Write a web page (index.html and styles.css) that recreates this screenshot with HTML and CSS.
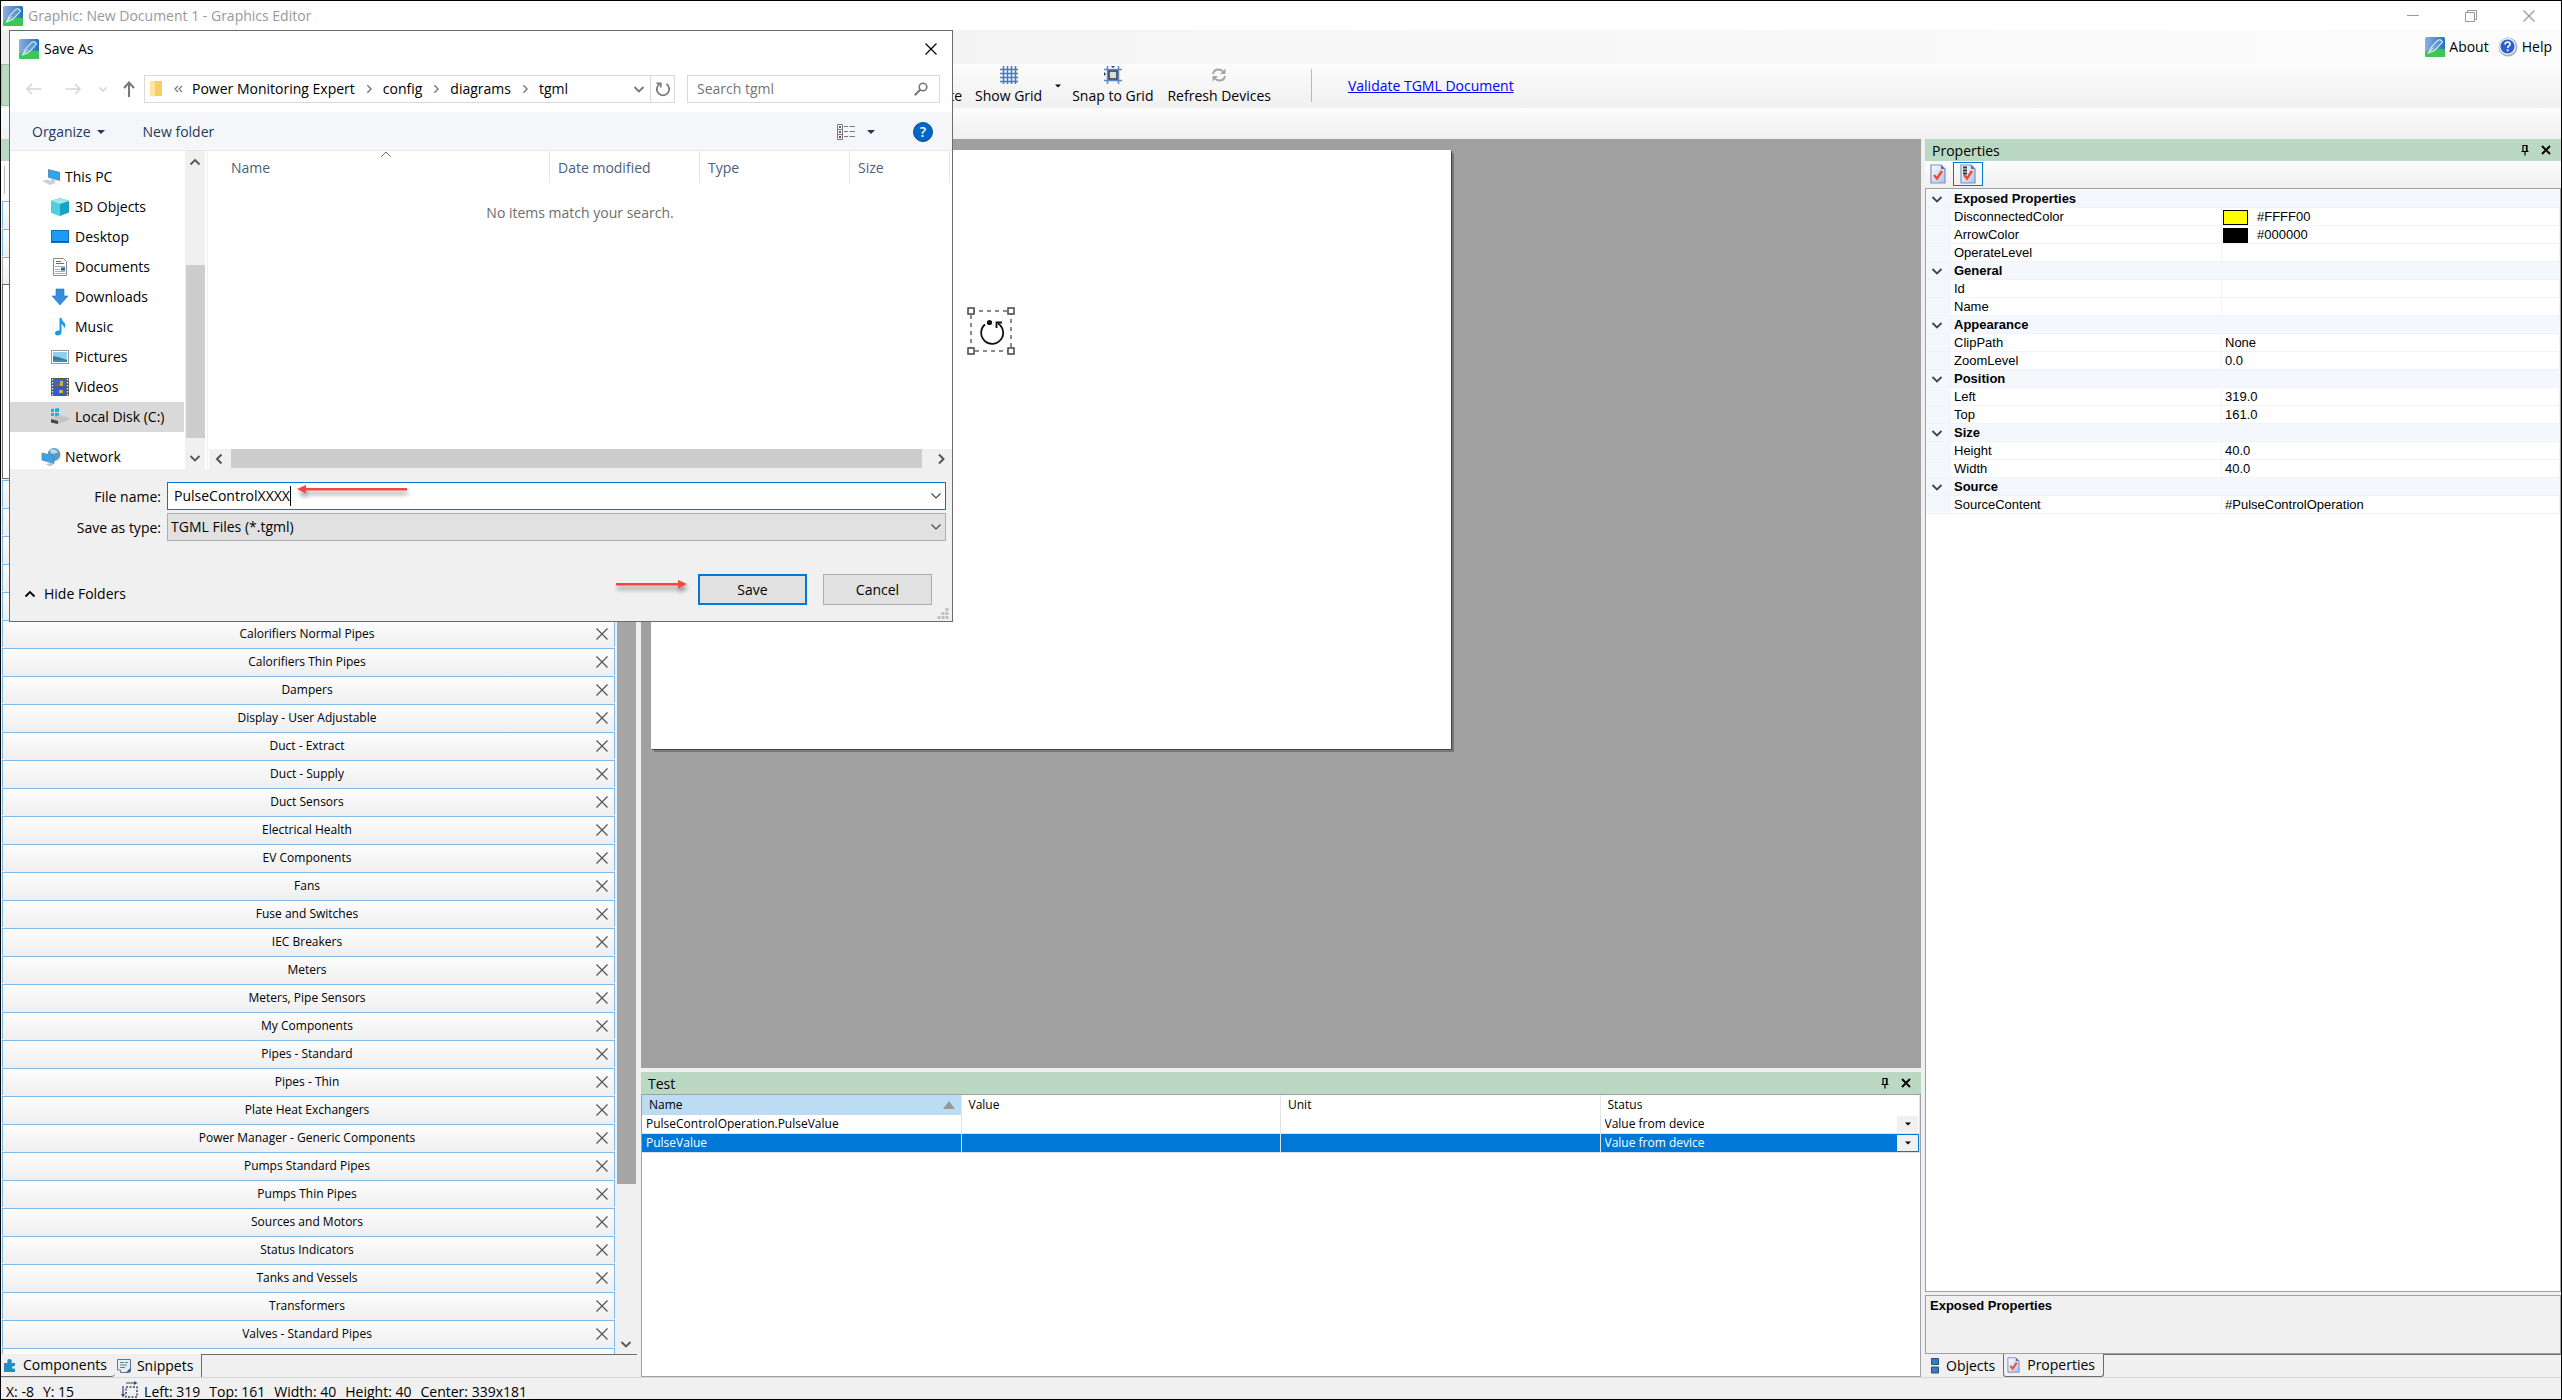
FILE: index.html
```html
<!DOCTYPE html>
<html lang="en">
  <head>
    <meta charset="utf-8">
    <title>Graphic: New Document 1 - Graphics Editor</title>
    <link rel="stylesheet" href="styles.css">
  </head>
  <body>
    <!-- Shared icons -->
    <svg class="sprite" width="0" height="0">
      <defs>
        <linearGradient id="app-blue" x1="0" y1="0" x2="1" y2="0">
          <stop offset="0" stop-color="#8fb0dc" /><stop offset="1" stop-color="#2272c0" />
        </linearGradient>
        <linearGradient id="doc-fill" x1="0" y1="0" x2="1" y2="1">
          <stop offset="0" stop-color="#ffffff" /><stop offset="1" stop-color="#a9c0ea" />
        </linearGradient>
      </defs>
      <symbol id="app" viewBox="0 0 20 20">
        <rect width="20" height="20" rx="1.500" fill="url(#app-blue)" />
        <path d="M0 15Q7 11 20 12V18.500Q20 20 18.500 20H1.500Q0 20 0 18.500Z" fill="#3cc755" />
        <path d="M3.500 16L6.500 10L12.500 3.500Q15.500 1.500 17.500 5L11 12L8.500 14Z" fill="#7db4da" fill-opacity=".4" stroke="#dcecfa" stroke-width="1.100" />
        <path d="M3.500 16L8.500 10.500" stroke="#dcecfa" />
      </symbol>
      <symbol id="x" viewBox="0 0 12 12"><path d="M.5 .5L11.500 11.500M11.500 .5L.5 11.500" fill="none" stroke="currentColor" stroke-width="1.200" /></symbol>
      <symbol id="x-bold" viewBox="0 0 12 12"><path d="M2 2L10 10M10 2L2 10" fill="none" stroke="currentColor" stroke-width="1.900" /></symbol>
      <symbol id="pin" viewBox="0 0 12 12"><path d="M4 7V1.500H8V7M2.500 7.500H9.500M6 7.500V11.500M7.500 1.500V7" fill="none" stroke="currentColor" stroke-width="1.200" /></symbol>
      <symbol id="down" viewBox="0 0 12 12"><path d="M1.500 4L6 8.500L10.500 4" fill="none" stroke="currentColor" stroke-width="1.800" /></symbol>
      <symbol id="up" viewBox="0 0 12 12"><path d="M1.500 8.500L6 4L10.500 8.500" fill="none" stroke="currentColor" stroke-width="1.800" /></symbol>
      <symbol id="left" viewBox="0 0 12 12"><path d="M8.500 1.500L4 6L8.500 10.500" fill="none" stroke="currentColor" stroke-width="2" /></symbol>
      <symbol id="right" viewBox="0 0 12 12"><path d="M4 1.500L8.500 6L4 10.500" fill="none" stroke="currentColor" stroke-width="2" /></symbol>
      <symbol id="thin-right" viewBox="0 0 12 12"><path d="M4 1.500L8.500 6L4 10.500" fill="none" stroke="currentColor" stroke-width="1.600" /></symbol>
      <symbol id="thin-down" viewBox="0 0 12 12"><path d="M1.500 3.500L6 8L10.500 3.500" fill="none" stroke="currentColor" stroke-width="1.100" /></symbol>
      <symbol id="caret" viewBox="0 0 8 8"><path d="M0 2H8L4 6Z" fill="currentColor" /></symbol>
      <symbol id="doc-check" viewBox="0 0 16 20">
        <path d="M1 1H11L15 5V19H1Z" fill="url(#doc-fill)" stroke="#7d8fc4" stroke-width="1.200" />
        <path d="M11 1V5H15Z" fill="#5a6fb0" />
        <path d="M4 11L7 14.500L12 7" fill="none" stroke="#f04a28" stroke-width="2.400" />
      </symbol>
    </svg>

    <div class="window">
      <header class="titlebar">
        <svg class="icon-20"><use href="#app" /></svg>
        <h1>Graphic: New Document 1 - Graphics Editor</h1>
        <div class="window-buttons">
          <button type="button" aria-label="Minimize"><svg class="icon-12" viewBox="0 0 12 12"><path d="M0 5.500H12" stroke="currentColor" /></svg></button>
          <button type="button" aria-label="Restore"><svg class="icon-12" viewBox="0 0 12 12"><path d="M.5 2.500H9.500V11.500H.5ZM2.500 2.500V.5H11.500V9.500H9.500" fill="none" stroke="currentColor" /></svg></button>
          <button type="button" aria-label="Close"><svg class="icon-12"><use href="#x" /></svg></button>
        </div>
      </header>

      <div class="menubar">
        <button type="button"><svg class="icon-20"><use href="#app" /></svg>About</button>
        <button type="button">
          <svg class="icon-20" viewBox="0 0 20 20">
            <circle cx="10" cy="10" r="9.500" fill="#a9aeb8" /><circle cx="9.500" cy="9.500" r="8.500" fill="#e8ebf2" /><circle cx="9.500" cy="9.500" r="7" fill="#2c5fc8" />
            <path d="M7 7.500Q7.200 5 9.600 5Q12 5 12 7.200Q12 8.500 10.500 9.300Q9.700 9.800 9.700 11" fill="none" stroke="#fff" stroke-width="1.700" /><circle cx="9.700" cy="13.300" r="1.100" fill="#fff" />
          </svg>Help
        </button>
      </div>

      <div class="toolbar">
        <div class="tool-group">
          <button type="button" class="tool active">Select</button>
          <button type="button" class="tool">Rotate</button>
        </div>
        <button type="button" class="tool">
          <svg class="icon-18" viewBox="0 0 18 18"><path d="M3.500 0V18M7.500 0V18M11.500 0V18M15.500 0V18M0 3.500H18M0 7.500H18M0 11.500H18M0 15.500H18" stroke="#4f78bd" stroke-width="1.600" /></svg>
          Show Grid
        </button>
        <button type="button" class="tool-menu" aria-label="Grid options"><svg class="icon-6"><use href="#caret" /></svg></button>
        <button type="button" class="tool">
          <svg class="icon-18" viewBox="0 0 18 18">
            <path d="M3.500 0V18M14.500 0V18M0 3.500H18M0 14.500H18" stroke="#5c86c6" stroke-width="1.500" />
            <rect x="5" y="5" width="8" height="8" fill="#d6dbe5" stroke="#30343c" stroke-width="1.500" />
            <path d="M7 0H11L9 2ZM0 6L2 8L0 10Z" fill="#223a70" />
          </svg>
          Snap to Grid
        </button>
        <button type="button" class="tool">
          <svg class="icon-18" viewBox="0 0 18 18">
            <path d="M3 8Q4 3.500 8.500 3.500Q11.500 3.500 13.500 6M15 10Q14 14.500 9.500 14.500Q6.500 14.500 4.500 12" fill="none" stroke="#a5a5a5" stroke-width="2" />
            <path d="M15.500 2.500V8H10ZM2.500 15.500V10H8Z" fill="#a5a5a5" />
          </svg>
          Refresh Devices
        </button>
        <span class="separator"></span>
        <a href="#validate">Validate TGML Document</a>
      </div>
      <div class="toolbar-secondary"></div>

      <main class="workspace">
        <aside class="dock components">
          <div class="dock-header"></div>
          <div class="component-tools"><span></span></div>
          <div class="component-body">
            <div class="component-list">
              <div class="component"></div>
              <div class="component"></div>
              <div class="component open"></div>
              <div class="component-content"></div>
              <div class="component"></div>
              <div class="component"></div>
              <div class="component"></div>
              <div class="component"></div>
              <div class="component"></div>
              <div class="component"><span>Calorifiers Normal Pipes</span><button type="button" aria-label="Close"><svg class="icon-12"><use href="#x" /></svg></button></div>
              <div class="component"><span>Calorifiers Thin Pipes</span><button type="button" aria-label="Close"><svg class="icon-12"><use href="#x" /></svg></button></div>
              <div class="component"><span>Dampers</span><button type="button" aria-label="Close"><svg class="icon-12"><use href="#x" /></svg></button></div>
              <div class="component"><span>Display - User Adjustable</span><button type="button" aria-label="Close"><svg class="icon-12"><use href="#x" /></svg></button></div>
              <div class="component"><span>Duct - Extract</span><button type="button" aria-label="Close"><svg class="icon-12"><use href="#x" /></svg></button></div>
              <div class="component"><span>Duct - Supply</span><button type="button" aria-label="Close"><svg class="icon-12"><use href="#x" /></svg></button></div>
              <div class="component"><span>Duct Sensors</span><button type="button" aria-label="Close"><svg class="icon-12"><use href="#x" /></svg></button></div>
              <div class="component"><span>Electrical Health</span><button type="button" aria-label="Close"><svg class="icon-12"><use href="#x" /></svg></button></div>
              <div class="component"><span>EV Components</span><button type="button" aria-label="Close"><svg class="icon-12"><use href="#x" /></svg></button></div>
              <div class="component"><span>Fans</span><button type="button" aria-label="Close"><svg class="icon-12"><use href="#x" /></svg></button></div>
              <div class="component"><span>Fuse and Switches</span><button type="button" aria-label="Close"><svg class="icon-12"><use href="#x" /></svg></button></div>
              <div class="component"><span>IEC Breakers</span><button type="button" aria-label="Close"><svg class="icon-12"><use href="#x" /></svg></button></div>
              <div class="component"><span>Meters</span><button type="button" aria-label="Close"><svg class="icon-12"><use href="#x" /></svg></button></div>
              <div class="component"><span>Meters, Pipe Sensors</span><button type="button" aria-label="Close"><svg class="icon-12"><use href="#x" /></svg></button></div>
              <div class="component"><span>My Components</span><button type="button" aria-label="Close"><svg class="icon-12"><use href="#x" /></svg></button></div>
              <div class="component"><span>Pipes - Standard</span><button type="button" aria-label="Close"><svg class="icon-12"><use href="#x" /></svg></button></div>
              <div class="component"><span>Pipes - Thin</span><button type="button" aria-label="Close"><svg class="icon-12"><use href="#x" /></svg></button></div>
              <div class="component"><span>Plate Heat Exchangers</span><button type="button" aria-label="Close"><svg class="icon-12"><use href="#x" /></svg></button></div>
              <div class="component"><span>Power Manager - Generic Components</span><button type="button" aria-label="Close"><svg class="icon-12"><use href="#x" /></svg></button></div>
              <div class="component"><span>Pumps Standard Pipes</span><button type="button" aria-label="Close"><svg class="icon-12"><use href="#x" /></svg></button></div>
              <div class="component"><span>Pumps Thin Pipes</span><button type="button" aria-label="Close"><svg class="icon-12"><use href="#x" /></svg></button></div>
              <div class="component"><span>Sources and Motors</span><button type="button" aria-label="Close"><svg class="icon-12"><use href="#x" /></svg></button></div>
              <div class="component"><span>Status Indicators</span><button type="button" aria-label="Close"><svg class="icon-12"><use href="#x" /></svg></button></div>
              <div class="component"><span>Tanks and Vessels</span><button type="button" aria-label="Close"><svg class="icon-12"><use href="#x" /></svg></button></div>
              <div class="component"><span>Transformers</span><button type="button" aria-label="Close"><svg class="icon-12"><use href="#x" /></svg></button></div>
              <div class="component"><span>Valves - Standard Pipes</span><button type="button" aria-label="Close"><svg class="icon-12"><use href="#x" /></svg></button></div>
              <div class="component"></div>
            </div>
            <div class="component-scroll">
              <div class="thumb"></div>
              <svg class="icon-12"><use href="#down" /></svg>
            </div>
          </div>
          <div class="tabs">
            <button type="button" class="tab selected">
              <svg class="icon-14" viewBox="0 0 14 14"><path d="M1 5H4.500Q3.500 1 6.500 1Q9.500 1 8.500 5H12V8Q9 7.500 9 9.500Q9 11 12 10.700V14H1Z" fill="#1f8fc4" /></svg>
              Components
            </button>
            <button type="button" class="tab">
              <svg class="icon-14" viewBox="0 0 14 14"><path d="M.5 .5H13.500V11L11 13.500H3.500V11H.5Z" fill="#e4ecf6" stroke="#5d7699" /><path d="M3 3.500H7M8 3.500H11M3 6H10M3 8.500H8" stroke="#5a8a6c" /><path d="M9 13.500L13.500 9V13.500Z" fill="#34507c" /></svg>
              Snippets
            </button>
            <span class="tabs-rest"></span>
          </div>
        </aside>

        <section class="center">
          <div class="canvas">
            <div class="page">
              <svg class="selection" viewBox="0 0 50 50">
                <rect x="5" y="5" width="40" height="40" fill="none" stroke="#666" stroke-width="1.500" stroke-dasharray="4 4" />
                <g fill="#fff" stroke="#444" stroke-width="1.500"><rect x="2" y="2" width="6" height="6" /><rect x="42" y="2" width="6" height="6" /><rect x="2" y="42" width="6" height="6" /><rect x="42" y="42" width="6" height="6" /></g>
                <path d="M19 18.500A11 11 0 1 0 32 17.500" fill="none" stroke="#111" stroke-width="1.800" />
                <path d="M30.500 22V16.500H36" fill="none" stroke="#111" stroke-width="1.800" />
                <circle cx="23.500" cy="16.500" r="2.600" fill="#111" />
              </svg>
            </div>
          </div>
          <div class="test">
            <div class="dock-header">
              <h2>Test</h2>
              <button type="button" aria-label="Pin"><svg class="icon-12"><use href="#pin" /></svg></button>
              <button type="button" aria-label="Close"><svg class="icon-12"><use href="#x-bold" /></svg></button>
            </div>
            <div class="test-body">
              <table class="test-table">
                <thead>
                  <tr>
                    <th class="sorted"><div>Name<svg width="12" height="8" viewBox="0 0 12 8"><path d="M0 8L6 0L12 8Z" fill="#999" /></svg></div></th>
                    <th>Value</th>
                    <th>Unit</th>
                    <th>Status</th>
                  </tr>
                </thead>
                <tbody>
                  <tr>
                    <td>PulseControlOperation.PulseValue</td><td></td><td></td>
                    <td><div class="status"><select aria-label="Status of PulseControlOperation.PulseValue"><option>Value from device</option></select><span><svg class="icon-6"><use href="#caret" /></svg></span></div></td>
                  </tr>
                  <tr class="selected">
                    <td>PulseValue</td><td></td><td></td>
                    <td><div class="status"><select aria-label="Status of PulseValue"><option>Value from device</option></select><span><svg class="icon-6"><use href="#caret" /></svg></span></div></td>
                  </tr>
                </tbody>
              </table>
            </div>
          </div>
        </section>

        <aside class="dock properties">
          <div class="dock-header">
            <h2>Properties</h2>
            <button type="button" aria-label="Pin"><svg class="icon-12"><use href="#pin" /></svg></button>
            <button type="button" aria-label="Close"><svg class="icon-12"><use href="#x-bold" /></svg></button>
          </div>
          <div class="property-tools">
            <button type="button" aria-label="Properties"><svg width="16" height="20"><use href="#doc-check" /></svg></button>
            <button type="button" class="active" aria-label="Exposed properties">
              <svg width="16" height="20" viewBox="0 0 16 20"><use href="#doc-check" /><path d="M3 3.500H7M3 6.500H7M3 9.500H7" stroke="#333" stroke-width="2" /></svg>
            </button>
          </div>
          <div class="property-grid">
            <table>
              <colgroup><col class="gutter"><col class="key"><col></colgroup>
              <tbody>
                <tr class="category"><td><svg class="icon-12"><use href="#down" /></svg></td><th colspan="2">Exposed Properties</th></tr>
                <tr><td></td><td>DisconnectedColor</td><td><div class="color"><span class="swatch yellow"></span>#FFFF00</div></td></tr>
                <tr><td></td><td>ArrowColor</td><td><div class="color"><span class="swatch black"></span>#000000</div></td></tr>
                <tr><td></td><td>OperateLevel</td><td></td></tr>
                <tr class="category"><td><svg class="icon-12"><use href="#down" /></svg></td><th colspan="2">General</th></tr>
                <tr><td></td><td>Id</td><td></td></tr>
                <tr><td></td><td>Name</td><td></td></tr>
                <tr class="category"><td><svg class="icon-12"><use href="#down" /></svg></td><th colspan="2">Appearance</th></tr>
                <tr><td></td><td>ClipPath</td><td>None</td></tr>
                <tr><td></td><td>ZoomLevel</td><td>0.0</td></tr>
                <tr class="category"><td><svg class="icon-12"><use href="#down" /></svg></td><th colspan="2">Position</th></tr>
                <tr><td></td><td>Left</td><td>319.0</td></tr>
                <tr><td></td><td>Top</td><td>161.0</td></tr>
                <tr class="category"><td><svg class="icon-12"><use href="#down" /></svg></td><th colspan="2">Size</th></tr>
                <tr><td></td><td>Height</td><td>40.0</td></tr>
                <tr><td></td><td>Width</td><td>40.0</td></tr>
                <tr class="category"><td><svg class="icon-12"><use href="#down" /></svg></td><th colspan="2">Source</th></tr>
                <tr><td></td><td>SourceContent</td><td>#PulseControlOperation</td></tr>
              </tbody>
            </table>
          </div>
          <div class="property-help">Exposed Properties</div>
          <div class="tabs">
            <button type="button" class="tab">
              <svg width="8" height="16" viewBox="0 0 8 16"><path d="M.5 .5H7.500V6.500H.5ZM.5 9H7.500V15H.5Z" fill="#3a7abd" stroke="#24507f" /></svg>
              Objects
            </button>
            <button type="button" class="tab selected boxed"><svg width="13" height="16"><use href="#doc-check" /></svg>Properties</button>
            <span class="tabs-rest"></span>
          </div>
        </aside>
      </main>

      <footer class="statusbar">
        <span>X: -8</span><span>Y: 15</span>
        <svg class="icon-18" viewBox="0 0 18 18"><rect x="5" y="6" width="11" height="10" fill="none" stroke="#33496b" stroke-width="1.500" stroke-dasharray="2 1.500" /><path d="M5 2H14M2 5V14" stroke="#33496b" stroke-width="1.200" /><path d="M13 0L16.500 2L13 4ZM0 13L2 16.500L4 13Z" fill="#33496b" /></svg>
        <span>Left: 319</span><span>Top: 161</span><span>Width: 40</span><span>Height: 40</span><span>Center: 339x181</span>
      </footer>
    </div>

    <!-- Save As dialog -->
    <div class="dialog" role="dialog" aria-labelledby="dialog-title">
      <div class="dialog-title">
        <svg class="icon-20"><use href="#app" /></svg>
        <h2 id="dialog-title">Save As</h2>
        <button type="button" aria-label="Close"><svg class="icon-12"><use href="#x" /></svg></button>
      </div>

      <div class="navigation">
        <button type="button" class="disabled" aria-label="Back"><svg class="icon-16" viewBox="0 0 16 16"><path d="M15.500 8H1M6 3L1 8L6 13" fill="none" stroke="currentColor" stroke-width="1.500" /></svg></button>
        <button type="button" class="disabled" aria-label="Forward"><svg class="icon-16" viewBox="0 0 16 16"><path d="M.5 8H15M10 3L15 8L10 13" fill="none" stroke="currentColor" stroke-width="1.500" /></svg></button>
        <button type="button" class="disabled recent" aria-label="Recent locations"><svg class="icon-10"><use href="#down" /></svg></button>
        <button type="button" aria-label="Up"><svg class="icon-16" viewBox="0 0 16 16"><path d="M8 16V1.500M3 7L8 1.500L13 7" fill="none" stroke="currentColor" stroke-width="2" /></svg></button>
        <div class="address">
          <svg width="13" height="18" viewBox="0 0 13 18"><path d="M3 1H12V16H3Z" fill="#f5cf66" /><path d="M0 1H3L5 3V17L0 15.500Z" fill="#ffe49b" /></svg>
          <svg class="overflow" width="9" height="8" viewBox="0 0 9 8"><path d="M4 1L1 4L4 7M8 1L5 4L8 7" fill="none" stroke="currentColor" stroke-width="1.200" /></svg>
          <span>Power Monitoring Expert</span>
          <svg class="icon-10"><use href="#thin-right" /></svg>
          <span>config</span>
          <svg class="icon-10"><use href="#thin-right" /></svg>
          <span>diagrams</span>
          <svg class="icon-10"><use href="#thin-right" /></svg>
          <span>tgml</span>
          <svg class="icon-12 history"><use href="#down" /></svg>
          <button type="button" class="refresh" aria-label="Refresh"><svg class="icon-16" viewBox="0 0 16 16"><path d="M4.500 3A6.200 6.200 0 1 0 11.500 3" fill="none" stroke="currentColor" stroke-width="1.800" /><path d="M1.500 2.300H5.800V6.500" fill="none" stroke="currentColor" stroke-width="1.600" /></svg></button>
        </div>
        <div class="search">
          <input type="text" placeholder="Search tgml" aria-label="Search tgml">
          <svg class="icon-14" viewBox="0 0 14 14"><circle cx="9" cy="5" r="3.800" fill="none" stroke="currentColor" stroke-width="1.600" /><path d="M6.200 7.800L.8 13.200" stroke="currentColor" stroke-width="2" /></svg>
        </div>
      </div>

      <div class="commands">
        <button type="button">Organize<svg class="icon-8"><use href="#caret" /></svg></button>
        <button type="button">New folder</button>
        <button type="button" class="view" aria-label="Change view">
          <svg class="icon-18" viewBox="0 0 18 18"><path d="M.5 1.500H5.500V16.500H.5ZM.5 6.500H5.500M.5 11.500H5.500M7 3.500H11M12.500 3.500H18M7 8.500H11M12.500 8.500H18M7 13.500H11M12.500 13.500H18" fill="none" stroke="#7a7a7a" /><path d="M2 3H4V5H2Z" fill="#2f7b96" /><path d="M2 8H4V10H2Z" fill="#466594" /><path d="M2 13H4V15H2Z" fill="#b5352a" /></svg>
          <svg class="icon-8"><use href="#caret" /></svg>
        </button>
        <button type="button" class="help" aria-label="Help">?</button>
      </div>

      <div class="browser">
        <nav class="tree">
          <a href="#this-pc" class="root"><svg class="icon-20" viewBox="0 0 20 20"><path d="M7 2L19 5V14L7 10.500Z" fill="#5a8fb5" /><path d="M8 3.300L18 5.800V12.700L8 9.800Z" fill="#2ea6f5" /><path d="M10 12L14 13V15L10 14Z" fill="#b8c4cf" /><path d="M1 14L6 12.500L15 16L9 18Z" fill="#c9d0d8" /></svg>This PC</a>
          <a href="#3d"><svg class="icon-18" viewBox="0 0 18 18"><path d="M9 0L18 3V14.500L9 18L0 14.500V3Z" fill="#13a5c4" /><path d="M0 3L9 6V18L0 14.500Z" fill="#52cfdc" /><path d="M9 0L18 3L9 6L0 3Z" fill="#9aeaf0" /></svg>3D Objects</a>
          <a href="#desktop"><svg class="icon-18" viewBox="0 0 18 18"><rect x=".5" y="2.500" width="17" height="12" fill="#1e9bf7" stroke="#0b73bd" /><path d="M1 13.500H17" stroke="#095c9c" /></svg>Desktop</a>
          <a href="#documents"><svg class="icon-18" viewBox="0 0 18 18"><path d="M2.500 .5H12.500L15.500 3.500V17.500H2.500Z" fill="#fff" stroke="#8b8b8b" /><path d="M5 3.500H10M5 5.500H13" stroke="#1b86d6" /><path d="M4 8.500H14M4 11.500H9M4 13.500H14M4 15.500H14" stroke="#9fb0bd" /><rect x="10" y="9.500" width="4" height="3" fill="#28629b" /></svg>Documents</a>
          <a href="#downloads"><svg class="icon-18" viewBox="0 0 18 18"><path d="M5 1H13V8H17L9 17L1 8H5Z" fill="#338fdd" stroke="#2473ba" stroke-width=".6" /></svg>Downloads</a>
          <a href="#music"><svg class="icon-18" viewBox="0 0 18 18"><path d="M8.500 0H10.500Q11 3 14 5.500Q15 8 13 11Q13 7 10.500 6V14Q10.500 17 7 17.500Q4 17.500 4 15Q4.500 12 8.500 12.500Z" fill="#129be9" /></svg>Music</a>
          <a href="#pictures"><svg class="icon-18" viewBox="0 0 18 18"><rect x=".5" y="2.500" width="17" height="13" fill="#fff" stroke="#999" /><rect x="2" y="4" width="14" height="10" fill="#8fd0f2" /><path d="M2 8Q8 9 16 12V14H2Z" fill="#3d7d80" /><path d="M2 12Q9 11 16 13V14H2Z" fill="#3a8fc0" /></svg>Pictures</a>
          <a href="#videos"><svg class="icon-18" viewBox="0 0 18 18"><rect width="18" height="18" fill="#555" /><rect x="3" y="1" width="12" height="7.500" fill="#3c66c0" /><rect x="3" y="9.500" width="12" height="7.500" fill="#2f5ed0" /><path d="M1.500 1V18M16.500 1V18" stroke="#ddd" stroke-width="1.500" stroke-dasharray="1.500 1.500" /><path d="M6 6H10V8H6Z" fill="#d8403c" /><path d="M9 3H12V8H9ZM8 12H12V15H8Z" fill="#d3b13a" /></svg>Videos</a>
          <a href="#local-disk" class="current"><svg class="icon-18" viewBox="0 0 18 18"><path d="M0 1L3 .7V4H0ZM4 .6L8 0V4H4ZM0 5H3V8.200L0 8ZM4 5H8V9L4 8.500Z" fill="#17b2ee" /><path d="M0 12L8 7L18 9.500V12L7 16L0 14.500Z" fill="#c4c4c4" /><path d="M0 11L7 13V16L0 14.500Z" fill="#444" /></svg>Local Disk (C:)</a>
          <a href="#network" class="root network"><svg class="icon-20" viewBox="0 0 20 20"><circle cx="13" cy="7.500" r="6.500" fill="#5e9cc4" /><path d="M9 3Q14 1 17 5Q13 8 10 6Z" fill="#b9dcec" /><path d="M1 6L13 9V16.500L1 13Z" fill="#39a3ea" stroke="#5d86a6" stroke-width=".8" /><path d="M5 17L10 16L13 18L8 19Z" fill="#b9c2ca" /></svg>Network</a>
        </nav>
        <div class="tree-scroll">
          <svg class="icon-12"><use href="#up" /></svg>
          <div class="thumb"></div>
          <svg class="icon-12"><use href="#down" /></svg>
        </div>
        <div class="files">
          <div class="columns">
            <button type="button" class="wide">Name<svg class="sort" viewBox="0 0 12 12"><path d="M1.500 8.500L6 4L10.500 8.500" fill="none" stroke="#666" /></svg></button>
            <button type="button">Date modified</button>
            <button type="button">Type</button>
            <button type="button" class="narrow">Size</button>
          </div>
          <p class="empty">No items match your search.</p>
          <div class="files-scroll">
            <svg class="icon-12"><use href="#left" /></svg>
            <div class="thumb"></div>
            <svg class="icon-12"><use href="#right" /></svg>
          </div>
        </div>
      </div>

      <form class="save-form">
        <label for="file-name">File name:</label>
        <div class="combo focused">
          <input id="file-name" type="text" value="PulseControlXXXX">
          <span class="text-cursor"></span>
          <svg class="pointer" width="118" height="20" viewBox="0 0 118 20"><path d="M6 6L15 2V5H116V7.500H15V10.500Z" fill="#fa4443" /></svg>
          <svg class="icon-12 chevron"><use href="#thin-down" /></svg>
        </div>
        <label for="file-type">Save as type:</label>
        <div class="combo">
          <select id="file-type"><option>TGML Files (*.tgml)</option></select>
          <svg class="icon-12 chevron"><use href="#thin-down" /></svg>
        </div>
      </form>
      <div class="actions">
        <button type="button" class="hide-folders"><svg class="icon-12"><use href="#up" /></svg>Hide Folders</button>
        <svg class="pointer" width="75" height="20" viewBox="0 0 75 20"><path d="M72 10L63 6V9H1V11.500H63V14.500Z" fill="#fa4443" /></svg>
        <button type="button" class="button primary">Save</button>
        <button type="button" class="button">Cancel</button>
      </div>
      <svg class="grip" viewBox="0 0 12 12"><path d="M8.500 0H11.500V3H8.500ZM4.500 4H7.500V7H4.500ZM8.500 4H11.500V7H8.500ZM.5 8H3.500V11H.5ZM4.500 8H7.500V11H4.500ZM8.500 8H11.500V11H8.500Z" fill="#bfbfbf" /></svg>
    </div>
  </body>
</html>
```
FILE: styles.css
```css
* {
  box-sizing: border-box;
}
body {
  margin: 0;
  font-family: "Open Sans", "Noto Sans", sans-serif;
  font-size: 14px;
  line-height: 20px;
  color: #000;
}
h1, h2, p {
  margin: 0;
  font-size: 14px;
  font-weight: normal;
}
button, input, select {
  margin: 0;
  padding: 0;
  border: 0;
  background: none;
  font: inherit;
  color: inherit;
  white-space: nowrap;
}
input, select {
  outline: none;
  appearance: none;
}
svg {
  display: block;
  flex: none;
}
.sprite {
  position: absolute;
}
.icon-6 { width: 6px; height: 6px; }
.icon-8 { width: 8px; height: 8px; }
.icon-10 { width: 10px; height: 10px; }
.icon-12 { width: 12px; height: 12px; }
.icon-14 { width: 14px; height: 14px; }
.icon-16 { width: 16px; height: 16px; }
.icon-18 { width: 18px; height: 18px; }
.icon-20 { width: 20px; height: 20px; }

/* Main window */
.window {
  display: flex;
  flex-direction: column;
  height: 100vh;
  border: 1px solid #000;
  background: #f0f0f0;
  overflow: hidden;
}
.titlebar {
  display: flex;
  align-items: center;
  gap: 5px;
  height: 29px;
  padding: 0 3px 0 2px;
  background: #fff;
  color: #999;
}
.titlebar h1 {
  flex: 1;
}
.window-buttons {
  display: flex;
}
.window-buttons button {
  display: flex;
  justify-content: center;
  width: 58px;
}
.menubar {
  display: flex;
  align-items: center;
  justify-content: flex-end;
  gap: 9px;
  height: 34px;
  padding-right: 9px;
  background: linear-gradient(to right, #f0f0f0, #fcfcfc);
}
.menubar button {
  display: flex;
  align-items: center;
  gap: 4px;
}
.toolbar {
  display: flex;
  height: 44px;
  background: linear-gradient(#fcfcfc, #f0f0f0);
}
.tool-group {
  display: flex;
  justify-content: space-between;
  width: 961px;
  margin-right: 13px;
}
.tool {
  display: flex;
  flex-direction: column;
  align-items: center;
  justify-content: flex-end;
  gap: 2px;
  padding-bottom: 2px;
}
.tool.active {
  width: 54px;
  height: 42px;
  border: 1px solid #93c3a2;
  background: #bad8c2;
}
.tool-menu {
  width: 30px;
  padding-left: 13px;
}
.tool + .tool {
  margin-left: 14px;
}
.separator {
  width: 1px;
  margin: 5px 36px 6px 40px;
  background: #b8b8b8;
}
.toolbar a {
  align-self: center;
  color: #0000ff;
}
.toolbar-secondary {
  height: 31px;
  background: linear-gradient(#fcfcfc, #f0f0f0);
}
.workspace {
  display: flex;
  flex: 1;
  gap: 4px;
  min-height: 0;
}
.dock {
  display: flex;
  flex-direction: column;
  flex: none;
  width: 636px;
}
.dock-header {
  display: flex;
  align-items: center;
  gap: 9px;
  height: 22px;
  padding: 0 9px 1px 7px;
  background: #bad8c2;
}
.dock-header h2 {
  flex: 1;
  padding-top: 3px;
}

/* Components dock */
.component-tools {
  height: 40px;
  padding: 5px 3px 7px;
  background: #fafafa;
}
.component-tools span {
  display: block;
  width: 1px;
  height: 100%;
  background: #b8b8b8;
}
.component-body {
  display: flex;
  flex: 1;
  min-height: 0;
}
.component-list {
  flex: 1;
  padding-left: 1px;
  overflow: hidden;
  font-size: 12px;
}
.component {
  display: flex;
  align-items: center;
  height: 27px;
  margin-bottom: 1px;
  padding-right: 6px;
  border: 1px solid #7eb9ea;
  border-bottom: 0;
  background: linear-gradient(#fdfdfd, #efefef);
}
.component.open {
  margin-bottom: 0;
  border-color: #aaa;
}
.component-content {
  height: 195px;
  margin-bottom: 1px;
  border: 1px solid #6b6b6b;
  background: #fff;
}
.component span {
  flex: 1;
  padding-left: 15px;
  text-align: center;
}
.component button {
  color: #555;
}
.component-scroll {
  display: flex;
  flex-direction: column;
  align-items: center;
  width: 22px;
  padding: 20px 1px 4px;
}
.component-scroll .thumb {
  width: 19px;
  height: 963px;
  margin-bottom: auto;
  background: #a6a6a6;
}
.component-scroll svg {
  color: #555;
}
.tabs {
  display: flex;
  height: 23px;
}
.tab {
  display: flex;
  align-items: center;
  gap: 6px;
  padding: 0 8px 0 2px;
}
.components .tab.selected {
  border-bottom: 1px solid #6b6b6b;
  border-bottom-right-radius: 4px;
}
.components .tab + .tab {
  border-right: 1px solid #6b6b6b;
}
.properties .tab {
  gap: 7px;
  padding-left: 6px;
}
.properties .boxed {
  padding-left: 3px;
  border: 1px solid #6b6b6b;
  border-top: 0;
  border-radius: 0 0 3px 3px;
}
.tabs-rest {
  flex: 1;
  border-top: 1px solid #6b6b6b;
}

/* Drawing area and test grid */
.center {
  display: flex;
  flex-direction: column;
  flex: 1;
  gap: 4px;
  min-width: 0;
}
.canvas {
  flex: 1;
  padding: 11px 10px;
  background: #a0a0a0;
}
.page {
  width: 800px;
  height: 599px;
  background: #fff;
  box-shadow: 1px 1px 0 #444, 3px 3px 0 #777;
  position: relative;
}
.selection {
  position: absolute;
  left: 315px;
  top: 156px;
  width: 50px;
  height: 50px;
}
.test {
  display: flex;
  flex-direction: column;
  height: 305px;
}
.test-body {
  flex: 1;
  border: 1px solid #a0a0a8;
  background: #fff;
}
.test-table {
  width: 100%;
  table-layout: fixed;
  border-collapse: separate;
  border-spacing: 0;
  font-size: 12px;
  line-height: 18px;
}
.test-table th {
  height: 20px;
  padding: 1px 6px 1px 7px;
  border-right: 1px solid #e5e5e5;
  font-weight: normal;
  text-align: left;
}
.test-table th.sorted {
  background: #bcdcf4;
}
.test-table th div {
  display: flex;
  align-items: center;
  justify-content: space-between;
}
.test-table td {
  height: 19px;
  padding: 0 0 0 4px;
  border-right: 1px solid #e0e0e0;
  border-bottom: 1px solid #e0e0e0;
}
.test-table .selected td {
  background: #0078d7;
  color: #fff;
}
.status {
  display: flex;
}
.status select {
  flex: 1;
  height: 18px;
}
.status span {
  display: flex;
  align-items: center;
  justify-content: center;
  width: 21px;
  height: 16px;
  margin: 1px;
  background: #f0f0f0;
  color: #000;
}

/* Properties dock */
.property-tools {
  display: flex;
  align-items: center;
  gap: 7px;
  height: 27px;
  padding: 0 0 2px 5px;
  background: linear-gradient(#fcfcfc, #f0f0f0);
}
.property-tools .active {
  padding: 1px 6px;
  border: 1px solid #0078d7;
}
.property-grid {
  flex: 1;
  margin-bottom: 3px;
  border: 1px solid #a0a0a0;
  background: #fff;
  overflow: hidden;
}
.property-grid table {
  width: 100%;
  margin-top: 1px;
  table-layout: fixed;
  border-collapse: separate;
  border-spacing: 0;
  font-family: "Liberation Sans", Arial, sans-serif;
  font-size: 13px;
  line-height: 16px;
}
.property-grid .gutter {
  width: 25px;
}
.property-grid .key {
  width: 271px;
}
.property-grid td, .property-grid th {
  height: 18px;
  padding: 1px 3px 0;
  border-bottom: 1px solid #f0f3f8;
  text-align: left;
}
.property-grid td {
  border-right: 1px solid #f0f3f8;
}
.property-grid td:first-child {
  padding-left: 5px;
  background: #f4f7fc;
  color: #444;
}
.property-grid .category th {
  background: #f4f7fc;
}
.color {
  display: flex;
  align-items: center;
  gap: 9px;
  margin-left: -2px;
}
.swatch {
  width: 25px;
  height: 15px;
  border: 1px solid #000;
}
.swatch.yellow {
  background: #ffff00;
}
.swatch.black {
  background: #000;
}
.property-help {
  height: 59px;
  padding: 1px 4px;
  border: 1px solid #a0a0a0;
  font: bold 13px/18px "Liberation Sans", Arial, sans-serif;
}
.statusbar {
  display: flex;
  align-items: center;
  gap: 9px;
  height: 22px;
  padding: 6px 0 0 5px;
  border-top: 1px solid #d7d7d7;
  overflow: hidden;
}
.statusbar svg {
  margin: 0 -4px 4px 38px;
}

/* Save As dialog */
.dialog {
  position: absolute;
  left: 9px;
  top: 30px;
  width: 944px;
  border: 1px solid #6b6b6b;
  background: #f0f0f0;
}
.dialog-title {
  display: flex;
  align-items: center;
  gap: 5px;
  height: 36px;
  padding: 0 15px 0 9px;
  background: #fff;
}
.dialog-title h2 {
  flex: 1;
}
.navigation {
  display: flex;
  align-items: center;
  height: 45px;
  padding: 0 12px 1px 16px;
  background: #fff;
  color: #777;
}
.navigation > button {
  margin-right: 23px;
}
.navigation > .recent {
  margin: 0 13px 0 -6px;
}
.navigation > button:nth-child(4) {
  margin-right: 7px;
}
.navigation .disabled {
  color: #d5d5d5;
}
.address {
  display: flex;
  align-items: center;
  flex: 1;
  gap: 9px;
  height: 28px;
  padding-left: 5px;
  border: 1px solid #d9d9d9;
}
.address span {
  color: #000;
}
.address .overflow {
  margin-left: 2px;
}
.address .history {
  margin: 0 -4px 0 auto;
}
.refresh {
  display: flex;
  align-items: center;
  justify-content: center;
  align-self: stretch;
  width: 24px;
  border-left: 1px solid #d9d9d9;
}
.search {
  display: flex;
  align-items: center;
  width: 253px;
  height: 28px;
  margin-left: 12px;
  padding: 0 11px 0 9px;
  border: 1px solid #d9d9d9;
}
.search input {
  flex: 1;
  min-width: 0;
}
.search input::placeholder {
  color: #767676;
}
.commands {
  display: flex;
  align-items: center;
  height: 39px;
  padding: 1px 19px 0 22px;
  border-bottom: 1px solid #e8e8e8;
  background: #f4f6f9;
  color: #1e395b;
}
.commands button {
  display: flex;
  align-items: center;
  gap: 6px;
  margin-right: 38px;
}
.commands .view {
  gap: 12px;
  margin-left: auto;
}
.commands .help {
  justify-content: center;
  width: 20px;
  height: 20px;
  margin: 0;
  border: 1px solid #0a4f91;
  border-radius: 50%;
  background: #0067c8;
  color: #fff;
  font-weight: 600;
}
.browser {
  display: flex;
  height: 318px;
  background: #fff;
}
.tree {
  width: 175px;
  padding: 11px 1px 0 0;
  overflow: hidden;
}
.tree a {
  display: flex;
  align-items: center;
  gap: 6px;
  height: 30px;
  padding-left: 41px;
  color: #000;
  text-decoration: none;
}
.tree .root {
  gap: 4px;
  padding-left: 31px;
}
.tree .current {
  background: #d9d9d9;
}
.tree .network {
  margin-top: 10px;
}
.tree-scroll {
  display: flex;
  flex-direction: column;
  align-items: center;
  justify-content: space-between;
  width: 20px;
  padding: 5px 0;
  background: #f0f0f0;
  color: #555;
}
.tree-scroll .thumb {
  width: 19px;
  height: 173px;
  margin-top: 82px;
  background: #cdcdcd;
}
.files {
  display: flex;
  flex-direction: column;
  flex: 1;
  margin-left: 2px;
  border-left: 1px solid #f0f0f0;
}
.columns {
  display: flex;
  height: 32px;
  padding-left: 15px;
}
.columns button {
  width: 150px;
  padding: 2px 0 0 8px;
  border-right: 1px solid #e5e5e5;
  color: #4c607a;
  text-align: left;
  position: relative;
}
.columns .wide {
  width: 327px;
}
.columns .narrow {
  width: 100px;
}
.sort {
  position: absolute;
  left: 157px;
  top: -3px;
  width: 12px;
  height: 12px;
}
.empty {
  flex: 1;
  padding-top: 20px;
  color: #6d6d6d;
  text-align: center;
}
.files-scroll {
  display: flex;
  align-items: center;
  gap: 6px;
  height: 20px;
  margin-left: 1px;
  padding: 0 5px 1px 4px;
  background: #f0f0f0;
  color: #555;
}
.files-scroll .thumb {
  flex: 1;
  height: 19px;
  margin-right: 7px;
  background: #cdcdcd;
}
.save-form {
  display: grid;
  grid-template-columns: 151px 1fr;
  align-items: center;
  gap: 3px 6px;
  padding: 13px 6px 0 0;
}
.save-form label {
  padding-top: 1px;
  text-align: right;
}
.combo {
  display: flex;
  align-items: center;
  height: 28px;
  padding: 0 3px;
  border: 1px solid #adadad;
  background: #e1e1e1;
}
.combo.focused {
  padding-left: 6px;
  border-color: #0078d7;
  background: #fff;
}
.combo input {
  field-sizing: content;
}
.combo select {
  flex: 1;
}
.combo .chevron {
  margin-left: auto;
  color: #444;
}
.text-cursor {
  width: 1px;
  height: 20px;
  background: #000;
}
.pointer {
  align-self: flex-start;
  filter: drop-shadow(1px 4px 2px #00000066);
}
.actions {
  display: flex;
  align-items: flex-start;
  padding: 33px 20px 16px 14px;
}
.hide-folders {
  display: flex;
  align-items: center;
  align-self: flex-end;
  gap: 8px;
  margin: 0 auto 1px 0;
}
.actions .pointer {
  margin-right: 8px;
}
.button {
  width: 109px;
  height: 31px;
  border: 1px solid #adadad;
  background: #e1e1e1;
}
.button.primary {
  margin-right: 16px;
  border: 2px solid #0078d7;
}
.grip {
  position: absolute;
  right: 3px;
  bottom: 1px;
  width: 12px;
  height: 12px;
}
```
